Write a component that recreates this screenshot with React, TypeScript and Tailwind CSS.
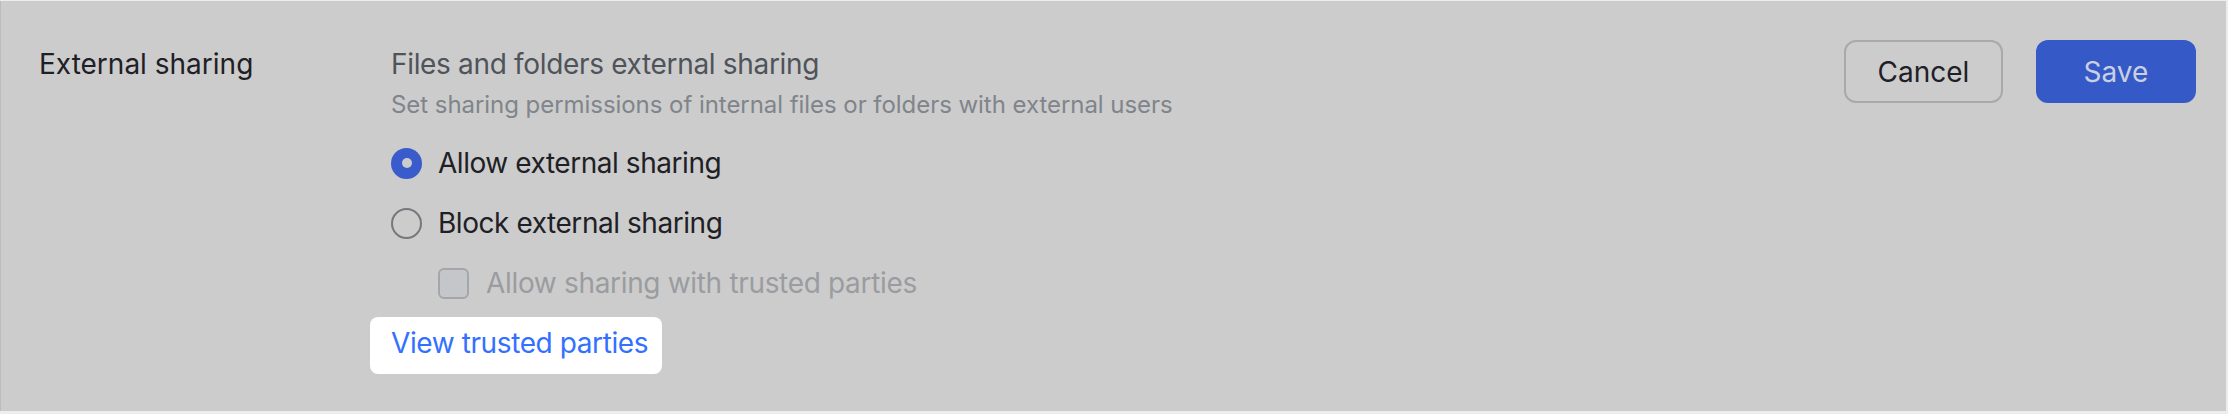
const font = { fontFamily: "Inter, 'Noto Sans', sans-serif" };

type RadioProps = { checked?: boolean; label: string };

const Radio = ({ checked, label }: RadioProps) => {
  return (
    <label className="flex h-[44px] items-center gap-[16px] cursor-pointer">
      {checked ? (
        <span className="flex h-[31px] w-[31px] items-center justify-center rounded-full bg-[#3a5bcb]">
          <span className="h-[10px] w-[10px] rounded-full bg-[#cccccc]" />
        </span>
      ) : (
        <span className="h-[31px] w-[31px] rounded-full border-2 border-[#76787c]" />
      )}
      <span className="text-[28px] leading-[44px] tracking-[-0.45px] text-[#1e2025]">
        {label}
      </span>
    </label>
  );
};

const App = () => {
  return (
    <div
      className="h-[414px] w-[2228px] bg-[#ededed] pb-[3px] pr-[2px] pt-px"
      style={font}
    >
      <div className="flex h-full border-l border-[#bcbcbc] bg-[#cccccc] pl-[38px] pr-[30px] pt-[39px]">
        {/* Label column */}
        <div className="w-[352px] shrink-0 pt-[4px] text-[28px] leading-[40px] text-[#1e2025]">
          External sharing
        </div>

        {/* Settings */}
        <div className="flex-1 pt-[4px]">
          <div className="text-[28px] leading-[40px] tracking-[-0.33px] text-[#4f535a]">
            Files and folders external sharing
          </div>
          <div className="mt-[4px] text-[24px] leading-[34px] tracking-[-0.05px] text-[#80848b]">
            Set sharing permissions of internal files or folders with external users
          </div>

          <div className="mt-[19px] flex flex-col gap-[16px]">
            <Radio checked label="Allow external sharing" />
            <Radio label="Block external sharing" />
            <div className="flex h-[44px] items-center gap-[17px] pl-[47px]">
              <span className="h-[31px] w-[31px] rounded-[6px] border-2 border-[#a4a6a9] bg-[#c5c6c9]" />
              <span className="text-[28px] leading-[44px] tracking-[-0.33px] text-[#9a9ca0]">
                Allow sharing with trusted parties
              </span>
            </div>
          </div>

          <div className="-ml-[21px] mt-[12px] w-[292px] rounded-[8px] bg-white pb-[11px] pl-[21px] pt-[6px]">
            <a
              href="#"
              className="text-[28px] leading-[40px] tracking-[-0.4px] text-[#3370ff]"
            >
              View trusted parties
            </a>
          </div>
        </div>

        {/* Actions */}
        <div className="flex shrink-0 items-start gap-[33px]">
          <button className="h-[63px] w-[159px] rounded-[12px] border-2 border-[#a9a9a9] text-[28px] text-[#1e2025]">
            Cancel
          </button>
          <button className="h-[63px] w-[160px] rounded-[12px] bg-[#3559c6] text-[28px] text-[#c9d0e2]">
            Save
          </button>
        </div>
      </div>
    </div>
  );
};

export default App;
